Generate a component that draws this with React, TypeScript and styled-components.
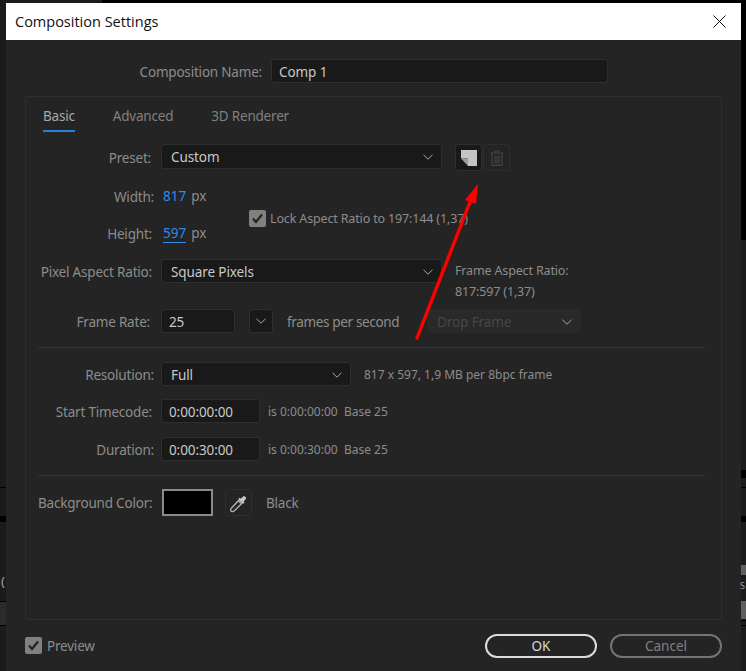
import styled, { createGlobalStyle } from "styled-components"
import type { ReactNode } from "react"

const Global = createGlobalStyle`
  html, body {
    margin: 0;
    padding: 0;
    background: #000;
  }
  body {
    width: 746px;
    height: 671px;
    overflow: hidden;
    font-family: "Noto Sans", "Liberation Sans", sans-serif;
  }
`

const Screen = styled.div`
  position: relative;
  width: 746px;
  height: 671px;
  padding: 3px 5px 0 6px;
  box-sizing: border-box;
  background: linear-gradient(#000, #000) 102px 0 / 100% 3px no-repeat, #1b1b1b;
  overflow: hidden;
`

const Dialog = styled.div`
  height: 668px;
  background: #242424;
  display: flex;
  flex-direction: column;
`

const TitleBar = styled.header`
  height: 37px;
  flex: none;
  background: #fff;
  color: #111;
  font-family: "Open Sans", sans-serif;
  font-size: 14.5px;
  padding: 0 15px 0 9px;
  display: flex;
  align-items: center;
  justify-content: space-between;
`

const NameRow = styled.div`
  display: flex;
  align-items: center;
  justify-content: flex-end;
  gap: 9px;
  margin: 19px 133px 0 0;
  height: 24px;
`

const Label = styled.label`
  color: #8c8c8c;
  font-size: 13.5px;
  letter-spacing: -0.2px;
  white-space: nowrap;
  padding-top: 1px;
`

const Field = styled.div<{ $w: number; $h?: number }>`
  width: ${p => p.$w}px;
  height: ${p => p.$h ?? 24}px;
  box-sizing: border-box;
  flex: none;
  display: flex;
  align-items: center;
  justify-content: space-between;
  padding: 1px 7px 0;
  background: #191919;
  border: 1px solid #2e2e2e;
  border-radius: 3px;
  color: #c8c8c8;
  font-size: 13.5px;
  letter-spacing: -0.1px;
`

const SelectField = styled(Field)<{ $off?: boolean }>`
  padding: 1px 6px 0 9px;
  align-self: ${p => (p.$h ? "flex-start" : "center")};
  background: ${p => (p.$off ? "#292929" : "#191919")};
  border-color: ${p => (p.$off ? "#292929" : "#2e2e2e")};
  color: ${p => (p.$off ? "#474747" : "#c8c8c8")};
`

const Panel = styled.section`
  flex: none;
  width: 697px;
  height: 524px;
  box-sizing: border-box;
  margin: 13px 0 0 19px;
  padding: 0 16px 0 12px;
  border: 1px solid #2f2f2f;
  border-radius: 3px;
`

const Tabs = styled.nav`
  display: flex;
  gap: 38px;
  height: 33px;
  padding: 8px 0 0 5px;
  box-sizing: border-box;
`

const Tab = styled.div<{ $on?: boolean }>`
  font-size: 13.5px;
  letter-spacing: -0.2px;
  line-height: 22px;
  height: 25px;
  color: ${p => (p.$on ? "#a8a8a8" : "#808080")};
  border-bottom: ${p => (p.$on ? "2px solid #2680d8" : "none")};
`

const Row = styled.div<{ $top: number; $h?: number }>`
  display: flex;
  align-items: center;
  height: ${p => p.$h ?? 24}px;
  margin-top: ${p => p.$top}px;
`

const RowLabel = styled(Label)<{ $gap?: number }>`
  width: ${p => 123 - (p.$gap ?? 9)}px;
  margin-right: ${p => p.$gap ?? 9}px;
  flex: none;
  text-align: right;
`

const Value = styled.span<{ $line?: boolean }>`
  color: #2d8ceb;
  font-size: 13.5px;
  margin-left: 2px;
  border-bottom: ${p => (p.$line ? "1px solid #2d8ceb" : "none")};
`

const Unit = styled.span`
  color: #8c8c8c;
  font-size: 13.5px;
  margin-left: 5px;
`

const SizeBlock = styled.div`
  display: flex;
  margin-top: 13px;
`

const SizeRows = styled.div`
  width: 211px;
  flex: none;
`

const Lock = styled.div`
  display: flex;
  align-items: center;
  gap: 4px;
  height: 18px;
  margin-top: 25px;
`

const Box = styled.span`
  width: 17px;
  height: 17px;
  flex: none;
  border-radius: 2px;
  background: #808080;
  display: grid;
  place-items: center;
`

const Note = styled.div`
  color: #8c8c8c;
  font-size: 12.5px;
  letter-spacing: -0.15px;
  line-height: 21px;
`

const FrameNote = styled(Note)`
  margin: 19px 0 0 13px;
`

const SmallNote = styled.span<{ $ml?: number }>`
  color: #8c8c8c;
  font-size: 12px;
  margin-left: ${p => p.$ml ?? 8}px;
  white-space: nowrap;
`

const IconButton = styled.button<{ $dark?: boolean; $w?: number; $h?: number; $ml?: number }>`
  width: ${p => p.$w ?? 27}px;
  height: ${p => p.$h ?? 27}px;
  margin-left: ${p => p.$ml ?? 0}px;
  padding: 0;
  flex: none;
  display: grid;
  place-items: center;
  box-sizing: border-box;
  border: 1px solid #2e2e2e;
  border-radius: 3px;
  background: ${p => (p.$dark ? "#191919" : "transparent")};
`

const Divider = styled.hr<{ $top: number }>`
  height: 1px;
  border: 0;
  margin: ${p => p.$top}px 0 0;
  background: #333;
`

const Swatch = styled.div`
  width: 51px;
  height: 27px;
  box-sizing: border-box;
  margin-left: 1px;
  background: #000;
  border: 2px solid #8a8a8a;
  flex: none;
`

const RateUnit = styled(Label)`
  width: 140px;
  margin-left: 14px;
  letter-spacing: -0.35px;
`

const ColorName = styled(Label)`
  margin-left: 14px;
`

const Footer = styled.footer`
  display: flex;
  align-items: center;
  margin: 13px 19px 0 19px;
  height: 25px;
`

const Preview = styled.div`
  display: flex;
  align-items: center;
  gap: 5px;
  flex: 1;
`

const Pill = styled.button<{ $primary?: boolean }>`
  width: 112px;
  height: 24px;
  margin-left: 13px;
  padding: 0;
  background: transparent;
  border-radius: 12px;
  border: 2px solid ${p => (p.$primary ? "#dcdcdc" : "#747474")};
  color: ${p => (p.$primary ? "#d8d8d8" : "#808080")};
  font: 13.5px "Noto Sans", sans-serif;
`

const Arrow = styled.svg`
  position: absolute;
  left: 0;
  top: 0;
  pointer-events: none;
`

const Edge = styled.div<{ $top: number; $h: number; $side: "left" | "right"; $c: string }>`
  position: absolute;
  top: ${p => p.$top}px;
  height: ${p => p.$h}px;
  ${p => p.$side}: 0;
  width: ${p => (p.$side === "left" ? 6 : 5)}px;
  background: ${p => p.$c};
`

const EdgeGlyph = styled.span<{ $top: number; $side: "left" | "right"; $size: number }>`
  position: absolute;
  top: ${p => p.$top}px;
  ${p => p.$side}: 1px;
  color: #a0a0a0;
  font-size: ${p => p.$size}px;
  line-height: 14px;
`

const Chevron = () => (
  <svg width="14" height="14" viewBox="0 0 14 14" fill="none">
    <path d="M2.5 4.8 7 9.2l4.5-4.4" stroke="#a8a8a8" strokeWidth="1" />
  </svg>
)

const Check = () => (
  <svg width="13" height="13" viewBox="0 0 13 13" fill="none">
    <path d="M2 6.5 5 10l6-7.5" stroke="#242424" strokeWidth="2.2" />
  </svg>
)

const Close = () => (
  <svg width="13" height="13" viewBox="0 0 13 13" fill="none">
    <path d="M.5.5l12 12M12.5.5l-12 12" stroke="#111" strokeWidth="1" />
  </svg>
)

const NewPreset = () => (
  <svg width="16" height="16" viewBox="0 0 16 16">
    <path d="M0 0h16v16H7V8.5H0z" fill="#c4c4c4" />
    <path d="M0 8.5h7V16z" fill="#9c9c9c" />
  </svg>
)

const Trash = () => (
  <svg width="14" height="16" viewBox="0 0 14 16" fill="none" stroke="#444" strokeWidth="1.2">
    <path d="M.5 3h13M5 3V1h4v2M2 3v12.4h10V3M5 5.5v8M7 5.5v8M9 5.5v8" />
  </svg>
)

const Dropper = () => (
  <svg width="22" height="22" viewBox="0 0 20 20" fill="none">
    <path d="M3 17.5c-1-1-.6-2 .2-3l6.2-6.6 2.8 2.8-6.4 6.4c-1 .9-2 1-2.8.4z" stroke="#b4b4b4" strokeWidth="1.2" />
    <path d="M9.2 6.6 13.6 11l1.4-1.4-.9-1 2-2.1c1.2-1.3-1-3.6-2.4-2.4l-2.1 2-1-.9z" fill="#c8c8c8" />
  </svg>
)

function FormRow({ label, top, children, h, gap }: {
  label: string
  top: number
  h?: number
  gap?: number
  children: ReactNode
}) {
  return (
    <Row $top={top} $h={h}>
      <RowLabel $gap={gap}>{label}</RowLabel>
      {children}
    </Row>
  )
}

export default function App() {
  return (
    <>
      <Global />
      <Screen>
        <Edge $side="right" $top={0} $h={240} $c="#000" />
        <Edge $side="right" $top={470} $h={8} $c="#000" />
        <Edge $side="right" $top={487} $h={1} $c="#000" />
        <Edge $side="right" $top={516} $h={6} $c="#000" />
        <Edge $side="right" $top={565} $h={10} $c="#5f5f5f" />
        <EdgeGlyph $side="right" $top={579} $size={9}>S</EdgeGlyph>
        <Edge $side="right" $top={601} $h={18} $c="#5f5f5f" />
        <Edge $side="right" $top={620} $h={1} $c="#000" />
        <Edge $side="right" $top={625} $h={1} $c="#000" />
        <Edge $side="left" $top={487} $h={1} $c="#000" />
        <Edge $side="left" $top={516} $h={6} $c="#000" />
        <EdgeGlyph $side="left" $top={574} $size={13}>(</EdgeGlyph>
        <Edge $side="left" $top={601} $h={24} $c="#2b2b2b" />
        <Edge $side="left" $top={601} $h={1} $c="#000" />
        <Edge $side="left" $top={625} $h={1} $c="#000" />
        <Dialog>
          <TitleBar>
            Composition Settings
            <Close />
          </TitleBar>

          <NameRow>
            <Label>Composition Name:</Label>
            <Field $w={337}>Comp 1</Field>
          </NameRow>

          <Panel>
            <Tabs>
              <Tab $on>Basic</Tab>
              <Tab>Advanced</Tab>
              <Tab>3D Renderer</Tab>
            </Tabs>

            <FormRow label="Preset:" top={14} h={27} gap={10}>
              <SelectField $w={281} $h={25}>
                Custom
                <Chevron />
              </SelectField>
              <IconButton $dark $ml={13}>
                <NewPreset />
              </IconButton>
              <IconButton $ml={1}>
                <Trash />
              </IconButton>
            </FormRow>

            <SizeBlock>
              <SizeRows>
                <FormRow label="Width:" top={0} gap={7}>
                  <Value>817</Value>
                  <Unit>px</Unit>
                </FormRow>
                <FormRow label="Height:" top={13}>
                  <Value $line>597</Value>
                  <Unit>px</Unit>
                </FormRow>
              </SizeRows>
              <Lock>
                <Box>
                  <Check />
                </Box>
                <Note>Lock Aspect Ratio to 197:144 (1,37)</Note>
              </Lock>
            </SizeBlock>

            <FormRow label="Pixel Aspect Ratio:" top={14}>
              <SelectField $w={281}>
                Square Pixels
                <Chevron />
              </SelectField>
              <FrameNote>
                Frame Aspect Ratio:
                <br />
                817:597 (1,37)
              </FrameNote>
            </FormRow>

            <FormRow label="Frame Rate:" top={26} gap={11}>
              <Field $w={74}>25</Field>
              <IconButton $dark $w={24} $h={24} $ml={14}>
                <Chevron />
              </IconButton>
              <RateUnit>frames per second</RateUnit>
              <SelectField $off $w={154}>
                Drop Frame
                <Chevron />
              </SelectField>
            </FormRow>

            <Divider $top={14} />

            <FormRow label="Resolution:" top={14} gap={7}>
              <SelectField $w={190}>
                Full
                <Chevron />
              </SelectField>
              <SmallNote $ml={13}>817 x 597, 1,9 MB per 8bpc frame</SmallNote>
            </FormRow>

            <FormRow label="Start Timecode:" top={13}>
              <Field $w={99}>0:00:00:00</Field>
              <SmallNote>is 0:00:00:00&nbsp; Base 25</SmallNote>
            </FormRow>

            <FormRow label="Duration:" top={14} gap={7}>
              <Field $w={99}>0:00:30:00</Field>
              <SmallNote>is 0:00:30:00&nbsp; Base 25</SmallNote>
            </FormRow>

            <Divider $top={14} />

            <FormRow label="Background Color:" top={13} h={27}>
              <Swatch />
              <IconButton $ml={12}>
                <Dropper />
              </IconButton>
              <ColorName>Black</ColorName>
            </FormRow>
          </Panel>

          <Footer>
            <Preview>
              <Box>
                <Check />
              </Box>
              <Label>Preview</Label>
            </Preview>
            <Pill $primary>OK</Pill>
            <Pill>Cancel</Pill>
          </Footer>
        </Dialog>

        <Arrow width="746" height="671" viewBox="0 0 746 671">
          <path d="M417 338 470 202" stroke="#f00" strokeWidth="3.4" strokeLinecap="round" />
          <path d="M478 184 465 200 476 204z" fill="#f00" />
        </Arrow>
      </Screen>
    </>
  )
}
